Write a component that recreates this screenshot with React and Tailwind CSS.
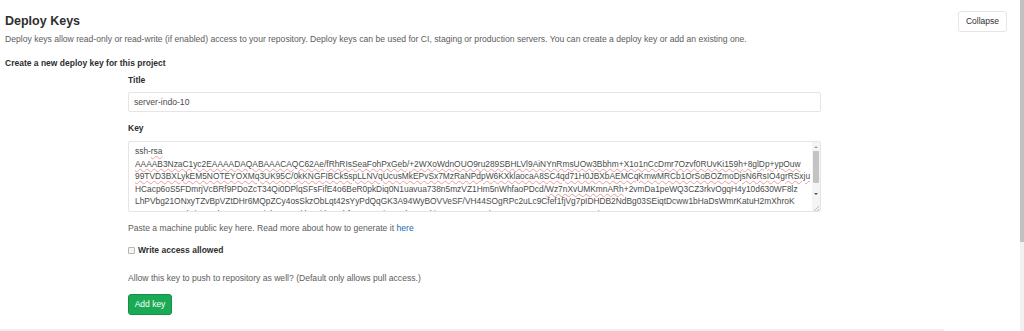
import React from 'react'

const font = { fontFamily: '"Liberation Sans", Arial, sans-serif' }

// spell-check squiggle under words the browser doesn't know
function Sq({ children }) {
  return (
    <span className="underline decoration-wavy decoration-[#ef9a9a] decoration-[0.5px] underline-offset-[1px]">
      {children}
    </span>
  )
}

const keyLines = [
  <>ssh-<Sq>rsa</Sq></>,
  <>
    <Sq>AAAAB3NzaC1yc2EAAAADAQABAAACAQC62Ae</Sq>/<Sq>fRhRIsSeaFohPxGeb</Sq>/<Sq>+2WXoWdnOUO9ru289SBHLVl9AiNYnRmsUOw3Bbhm</Sq>
    <Sq>+X1o1nCcDmr7Ozvf0RUvKi159h</Sq><Sq>+8glDp</Sq><Sq>+ypOuw</Sq>
  </>,
  <>
    <Sq>99TVD3BXLykEM5NOTEYOXMq3UK95C</Sq>/<Sq>0kKNGFIBCk5spLLNVqUcusMkEPvSx7MzRaNPdpW6KXklaocaA8SC4qd71H0JBXbAEMCqKmwMRCb1OrSoBOZmoDjsN6RsIO4grRSxju</Sq>
  </>,
  <>
    HCacp6oS5FDmrjVcBRf9PDoZcT34Qi0DPlqSFsFifE4o6BeR0pkDiq0N1uavua738n5mzVZ1Hm5nWhfaoPDcd/<Sq>Wz7nXvUMKmnARh</Sq>+2vmDa1peWQ3CZ3rkvOgqH4y10d630WF8lz
  </>,
  <>LhPVbg21ONxyTZvBpVZtDHr6MQpZCy4osSkzObLqt42sYyPdQqGK3A94WyBOVVeSF/VH44SOgRPc2uLc9Cfef1fjVg7pIDHDB2NdBg03SEiqtDcww1bHaDsWmrKatuH2mXhroK</>,
  <>
    <Sq>mTQEyycSQdUjHq</Sq>+VbFzvTIPHeJj4hMTWp/dnaxjIboq1bf5T7TnnuiyEcRbtuHmkiOsn8NzQgDo/BO3rNWyIsHIUmPe8OOFJ8jzzFN
  </>,
]

function KeyBox() {
  return (
    <div className="mt-[6px] h-[71px] w-[693px] flex border border-[#e5e5e5] rounded-[2px] bg-white overflow-hidden">
      <div className="flex-1 overflow-hidden pl-[6px] pt-[3px] text-[8.4px] leading-[12.6px] text-[#4a4a4a]">
        {keyLines.map((l, i) => (
          <div key={i} className="whitespace-nowrap">{l}</div>
        ))}
      </div>
      {/* textarea scrollbar */}
      <div className="w-[8px] flex flex-col items-center bg-[#f4f4f4]">
        <svg width="8" height="8" viewBox="0 0 8 8" className="mt-[1px]">
          <path d="M2 5 L4 3 L6 5 Z" fill="#a3a3a3" />
        </svg>
        <div className="w-[6px] h-[32px] bg-[#c3c3c3] rounded-[1px]" />
        <div className="flex-1" />
        <svg width="8" height="8" viewBox="0 0 8 8" className="mb-[7px]">
          <path d="M2 3 L4 5 L6 3 Z" fill="#505050" />
        </svg>
        <svg width="8" height="6" viewBox="0 0 8 6">
          <path d="M7 1 L2 6 M7 4 L5 6" stroke="#aaa" strokeWidth="0.8" />
        </svg>
      </div>
    </div>
  )
}

export default function App() {
  return (
    <div className="w-[1024px] h-[331px] flex bg-white overflow-hidden" style={font}>
      <div className="flex-1 flex flex-col">
        <div className="flex-1 pl-[5px] pt-[11px]">
          <div className="flex items-start justify-between">
            <h2 className="text-[12.5px] leading-[19px] font-bold text-[#2e2e2e] pt-[1px]">Deploy Keys</h2>
            <button className="mr-[13px] h-[21px] w-[49px] flex items-center justify-center border border-[#e5e5e5] rounded-[3px] bg-white text-[8.5px] text-[#2e2e2e]">
              Collapse
            </button>
          </div>
          <p className="text-[8.6px] leading-[14px] text-[#5c5c5c]">
            Deploy keys allow read-only or read-write (if enabled) access to your repository. Deploy keys can be used for CI, staging or production servers. You can create a deploy key or add an existing one.
          </p>
          <h5 className="mt-[10px] text-[8.5px] leading-[14px] font-bold text-[#2e2e2e]">
            Create a new deploy key for this project
          </h5>

          <div className="pl-[123px]">
            <label className="block mt-[3px] text-[8.5px] leading-[14px] font-bold text-[#2e2e2e]">Title</label>
            <div className="mt-[5px] h-[20px] w-[693px] flex items-center pl-[5px] border border-[#e5e5e5] rounded-[2px] text-[8.6px] text-[#4a4a4a]">
              server-indo-10
            </div>

            <label className="block mt-[9px] text-[8.5px] leading-[14px] font-bold text-[#2e2e2e]">Key</label>
            <KeyBox />

            <p className="mt-[9px] text-[8.6px] leading-[14px] text-[#5c5c5c]">
              Paste a machine public key here. Read more about how to generate it <span className="text-[#1b69b6]">here</span>
            </p>

            <div className="mt-[8px] h-[14px] flex items-center gap-[3px]">
              <span className="w-[7px] h-[7px] border border-[#b5b5b5] rounded-[1px] bg-[#f5f5f5]" />
              <span className="text-[8.5px] font-bold text-[#2e2e2e]">Write access allowed</span>
            </div>

            <p className="mt-[14px] text-[8.6px] leading-[14px] text-[#5c5c5c]">
              Allow this key to push to repository as well? (Default only allows pull access.)
            </p>

            <button className="mt-[9px] h-[21px] w-[44px] flex items-center justify-center rounded-[3px] bg-[#1aaa55] border border-[#168f48] text-[8.5px] text-white">
              Add key
            </button>
          </div>
        </div>
        <div className="h-[2px] w-[944px] bg-[#f0f0f0]" />
      </div>

      {/* page scrollbar */}
      <div className="w-[4px] flex flex-col bg-[#f1f1f1]">
        <div className="h-[242px] bg-[#c1c1c1]" />
      </div>
    </div>
  )
}
